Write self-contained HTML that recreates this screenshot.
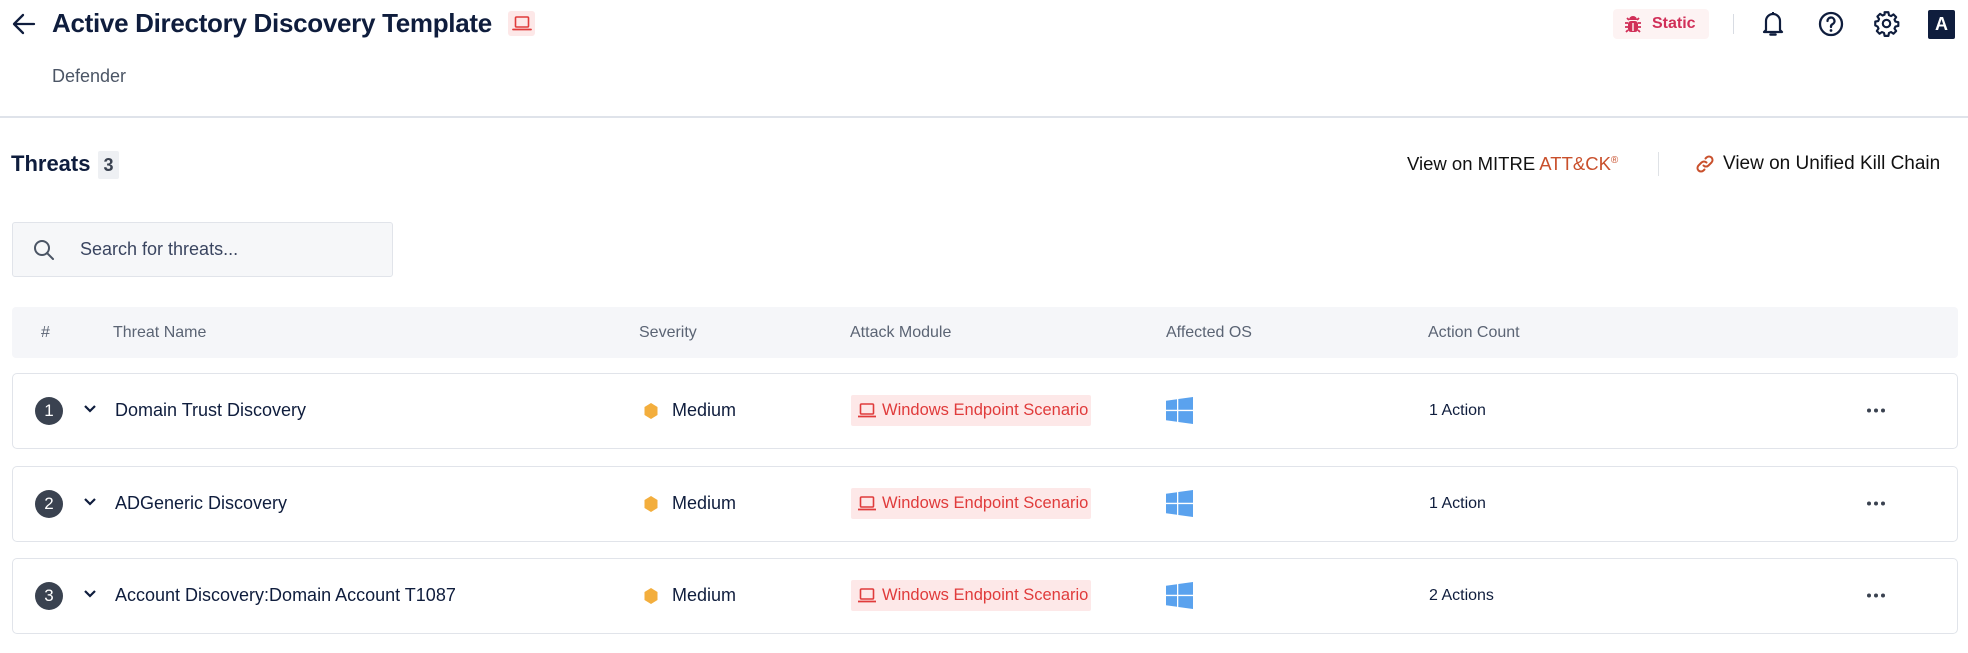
<!DOCTYPE html>
<html><head><meta charset="utf-8"><style>
*{box-sizing:border-box;margin:0;padding:0}
body{width:1968px;height:653px;background:#fff;font-family:"Liberation Sans",Arial,sans-serif;position:relative;overflow:hidden;color:#0f1d3d}
.a{position:absolute}
.vc{display:flex;align-items:center}
.row{position:absolute;left:12px;width:1946px;height:76px;border:1.5px solid #e1e4ea;border-radius:5px;background:#fff}
.num{position:absolute;left:22px;top:23px;width:28px;height:28px;border-radius:50%;background:#3a4250;color:#fff;font-size:17px;display:flex;align-items:center;justify-content:center}
.chev{position:absolute;left:70px;top:30px}
.name{position:absolute;left:102px;top:0;height:73px;display:flex;align-items:center;font-size:18px;color:#0f1d3d}
.sev{position:absolute;left:630px;top:0;height:73px;display:flex;align-items:center;font-size:18px}
.mod{position:absolute;left:838px;top:21px;height:31px;width:240px;background:#fde8e8;color:#e03b3b;font-size:16.5px;display:flex;align-items:center;padding-left:6px;border-radius:2px}
.win{position:absolute;left:1153px;top:23px}
.act{position:absolute;left:1416px;top:0;height:73px;display:flex;align-items:center;font-size:16px}
.dots{position:absolute;left:1853px;top:34px}
.th{position:absolute;top:0;height:51px;display:flex;align-items:center;font-size:16px;color:#5b6474}
</style></head><body>
<svg class="a" style="left:12px;top:13px" width="24" height="22" viewBox="0 0 24 22"><path d="M22 11H3M11 2L2 11l9 9" fill="none" stroke="#0f1d3d" stroke-width="2.3" stroke-linecap="round" stroke-linejoin="round"/></svg>
<div class="a" style="left:52px;top:8px;font-size:26px;font-weight:bold;color:#0f1d3d;letter-spacing:-0.3px">Active Directory Discovery Template</div>
<div class="a" style="left:508px;top:11px;width:27px;height:25px;background:#fde8e8;border-radius:3px"></div>
<svg class="a" style="left:512px;top:15px" width="20" height="17" viewBox="0 0 20 17"><rect x="3.5" y="2" width="13" height="10" rx="1" fill="none" stroke="#e03b3b" stroke-width="1.6"/><path d="M1 14.5h18" stroke="#e03b3b" stroke-width="1.8" stroke-linecap="round"/></svg>
<div class="a" style="left:52px;top:66px;font-size:18px;color:#4b5565">Defender</div>
<div class="a" style="left:0;top:116px;width:1968px;height:1.5px;background:#dfe3ea"></div>

<div class="a vc" style="left:1613px;top:9px;width:96px;height:30px;background:#fdf3f3;border-radius:4px;padding-left:10px;color:#d12f58;font-weight:bold;font-size:16px">
<svg width="20" height="20" viewBox="0 0 20 20" style="margin-right:9px"><path d="M6 6a4 4 0 0 1 8 0z" fill="#d12f58"/><rect x="5" y="7" width="10" height="11" rx="3" fill="#d12f58"/><path d="M2 9h3M15 9h3M2 13h3M15 13h3M3 18l2-2M17 18l-2-2M4 4l2 2M16 4l-2 2" stroke="#d12f58" stroke-width="1.8"/><path d="M10 9v8" stroke="#fdf3f3" stroke-width="1.4"/></svg>Static</div>
<div class="a" style="left:1733px;top:14px;width:1px;height:20px;background:#d8dce3"></div>
<svg class="a" style="left:1761px;top:10px" width="24" height="28" viewBox="0 0 24 28"><path d="M5 20V11a7 7 0 0 1 14 0v9l2 2H3z" fill="none" stroke="#0f1d3d" stroke-width="2.2" stroke-linejoin="round"/><path d="M9.5 24.5h5" stroke="#0f1d3d" stroke-width="2.5" stroke-linecap="round"/><path d="M12 2v2" stroke="#0f1d3d" stroke-width="2"/></svg>
<svg class="a" style="left:1818px;top:11px" width="26" height="26" viewBox="0 0 26 26"><circle cx="13" cy="13" r="11" fill="none" stroke="#0f1d3d" stroke-width="2.3"/><path d="M9.5 10a3.5 3.5 0 1 1 5 3.2c-1 .5-1.5 1.2-1.5 2.3v.5" fill="none" stroke="#0f1d3d" stroke-width="2.3" stroke-linecap="round"/><circle cx="13" cy="19.5" r="1.4" fill="#0f1d3d"/></svg>
<svg class="a" style="left:1873px;top:10px" width="27" height="27" viewBox="0 0 24 24"><path d="M10.3 2h3.4l.5 2.6 1.8.8 2.2-1.5 2.4 2.4-1.5 2.2.8 1.8 2.6.5v3.4l-2.6.5-.8 1.8 1.5 2.2-2.4 2.4-2.2-1.5-1.8.8-.5 2.6h-3.4l-.5-2.6-1.8-.8-2.2 1.5-2.4-2.4 1.5-2.2-.8-1.8L2 13.7v-3.4l2.6-.5.8-1.8-1.5-2.2 2.4-2.4 2.2 1.5 1.8-.8z" fill="none" stroke="#0f1d3d" stroke-width="1.9" stroke-linejoin="round"/><circle cx="12" cy="12" r="3.3" fill="none" stroke="#0f1d3d" stroke-width="1.9"/></svg>
<div class="a vc" style="left:1928px;top:10px;width:27px;height:29px;background:#0f1d3d;color:#fff;font-weight:bold;font-size:18px;justify-content:center;border-radius:2px">A</div>

<div class="a" style="left:11px;top:151px;font-size:22px;font-weight:bold;color:#0f1d3d">Threats</div>
<div class="a vc" style="left:98px;top:151px;width:21px;height:28px;background:#eef0f3;border-radius:2px;justify-content:center;font-size:18px;font-weight:bold;color:#3a4250">3</div>
<div class="a" style="left:1407px;top:153px;font-size:18.5px;color:#111">View on MITRE <span style="color:#c9502c">ATT&amp;CK</span><sup style="color:#c9502c;font-size:10px">®</sup></div>
<div class="a" style="left:1658px;top:152px;width:1px;height:24px;background:#dfe2e6"></div>
<svg class="a" style="left:1695px;top:154px" width="20" height="20" viewBox="0 0 20 20"><path d="M8.5 11.5a3.5 3.5 0 0 0 5 0l3-3a3.5 3.5 0 0 0-5-5l-1 1M11.5 8.5a3.5 3.5 0 0 0-5 0l-3 3a3.5 3.5 0 0 0 5 5l1-1" fill="none" stroke="#c9502c" stroke-width="2" stroke-linecap="round"/></svg>
<div class="a" style="left:1723px;top:153px;font-size:19px;color:#111">View on Unified Kill Chain</div>

<div class="a vc" style="left:12px;top:222px;width:381px;height:55px;background:#f6f7f9;border:1.5px solid #e1e4ea;border-radius:3px">
<svg style="position:absolute;left:20px;top:16px" width="22" height="22" viewBox="0 0 22 22"><circle cx="9" cy="9" r="7" fill="none" stroke="#4b5565" stroke-width="2"/><path d="M14 14l6 6" stroke="#4b5565" stroke-width="2" stroke-linecap="round"/></svg>
<span style="position:absolute;left:67px;font-size:18px;color:#3a4560">Search for threats...</span></div>

<div class="a" style="left:12px;top:307px;width:1946px;height:51px;background:#f5f6f9;border-radius:4px">
<div class="th" style="left:29px">#</div>
<div class="th" style="left:101px">Threat Name</div>
<div class="th" style="left:627px">Severity</div>
<div class="th" style="left:838px">Attack Module</div>
<div class="th" style="left:1154px">Affected OS</div>
<div class="th" style="left:1416px">Action Count</div>
</div>

<div class="row" style="top:373px">
<div class="num">1</div>
<svg class="chev" width="14" height="10" viewBox="0 0 14 10"><path d="M2 2l5 5 5-5" fill="none" stroke="#0f1d3d" stroke-width="2.2"/></svg>
<div class="name">Domain Trust Discovery</div>
<div class="sev"><svg width="16" height="18" viewBox="0 0 16 18" style="margin-right:13px"><path d="M8 1l6.5 4v8L8 17l-6.5-4V5z" fill="#f3ae3d"/></svg>Medium</div>
<div class="mod"><svg width="20" height="17" viewBox="0 0 20 17" style="margin-right:5px"><rect x="3.5" y="2" width="13" height="10" rx="1" fill="none" stroke="#e03b3b" stroke-width="1.6"/><path d="M1 14.5h18" stroke="#e03b3b" stroke-width="1.8"/></svg>Windows Endpoint Scenario</div>
<svg class="win" width="27" height="27" viewBox="0 0 27 27"><path d="M0 3.8l11-1.6v10.6H0zM12.3 2L27 0v12.8H12.3zM0 14.1h11v10.7L0 23.2zM12.3 14.1H27V27l-14.7-2z" fill="#5aa2ee"/></svg>
<div class="act">1 Action</div>
<svg class="dots" width="20" height="5" viewBox="0 0 20 5"><circle cx="3" cy="2.5" r="2" fill="#3a4250"/><circle cx="10" cy="2.5" r="2" fill="#3a4250"/><circle cx="17" cy="2.5" r="2" fill="#3a4250"/></svg>
</div>

<div class="row" style="top:466px">
<div class="num">2</div>
<svg class="chev" width="14" height="10" viewBox="0 0 14 10"><path d="M2 2l5 5 5-5" fill="none" stroke="#0f1d3d" stroke-width="2.2"/></svg>
<div class="name">ADGeneric Discovery</div>
<div class="sev"><svg width="16" height="18" viewBox="0 0 16 18" style="margin-right:13px"><path d="M8 1l6.5 4v8L8 17l-6.5-4V5z" fill="#f3ae3d"/></svg>Medium</div>
<div class="mod"><svg width="20" height="17" viewBox="0 0 20 17" style="margin-right:5px"><rect x="3.5" y="2" width="13" height="10" rx="1" fill="none" stroke="#e03b3b" stroke-width="1.6"/><path d="M1 14.5h18" stroke="#e03b3b" stroke-width="1.8"/></svg>Windows Endpoint Scenario</div>
<svg class="win" width="27" height="27" viewBox="0 0 27 27"><path d="M0 3.8l11-1.6v10.6H0zM12.3 2L27 0v12.8H12.3zM0 14.1h11v10.7L0 23.2zM12.3 14.1H27V27l-14.7-2z" fill="#5aa2ee"/></svg>
<div class="act">1 Action</div>
<svg class="dots" width="20" height="5" viewBox="0 0 20 5"><circle cx="3" cy="2.5" r="2" fill="#3a4250"/><circle cx="10" cy="2.5" r="2" fill="#3a4250"/><circle cx="17" cy="2.5" r="2" fill="#3a4250"/></svg>
</div>

<div class="row" style="top:558px">
<div class="num">3</div>
<svg class="chev" width="14" height="10" viewBox="0 0 14 10"><path d="M2 2l5 5 5-5" fill="none" stroke="#0f1d3d" stroke-width="2.2"/></svg>
<div class="name">Account Discovery:Domain Account T1087</div>
<div class="sev"><svg width="16" height="18" viewBox="0 0 16 18" style="margin-right:13px"><path d="M8 1l6.5 4v8L8 17l-6.5-4V5z" fill="#f3ae3d"/></svg>Medium</div>
<div class="mod"><svg width="20" height="17" viewBox="0 0 20 17" style="margin-right:5px"><rect x="3.5" y="2" width="13" height="10" rx="1" fill="none" stroke="#e03b3b" stroke-width="1.6"/><path d="M1 14.5h18" stroke="#e03b3b" stroke-width="1.8"/></svg>Windows Endpoint Scenario</div>
<svg class="win" width="27" height="27" viewBox="0 0 27 27"><path d="M0 3.8l11-1.6v10.6H0zM12.3 2L27 0v12.8H12.3zM0 14.1h11v10.7L0 23.2zM12.3 14.1H27V27l-14.7-2z" fill="#5aa2ee"/></svg>
<div class="act">2 Actions</div>
<svg class="dots" width="20" height="5" viewBox="0 0 20 5"><circle cx="3" cy="2.5" r="2" fill="#3a4250"/><circle cx="10" cy="2.5" r="2" fill="#3a4250"/><circle cx="17" cy="2.5" r="2" fill="#3a4250"/></svg>
</div>
</body></html>
